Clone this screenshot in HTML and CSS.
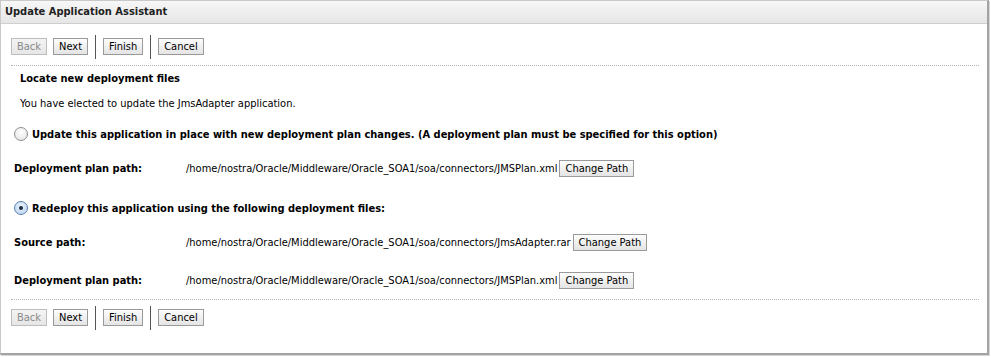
FILE: index.html
```html
<!DOCTYPE html>
<html>
<head>
<meta charset="utf-8">
<link rel="stylesheet" href="styles.css">
</head>
<body>
<div class="panel">
  <div class="header">Update Application Assistant</div>
  <div class="content">
    <div class="toolbar">
      <button class="btn" disabled>Back</button>
      <button class="btn">Next</button>
      <span class="sep"></span>
      <button class="btn">Finish</button>
      <span class="sep"></span>
      <button class="btn">Cancel</button>
    </div>
    <div class="dots"></div>
    <div class="intro">
      <div class="section-title">Locate new deployment files</div>
      <div class="desc">You have elected to update the JmsAdapter application.</div>
    </div>
    <label class="radio-row"><span class="radio"></span><span class="bold">Update this application in place with new deployment plan changes. (A deployment plan must be specified for this option)</span></label>
    <div class="field row1">
      <span class="label">Deployment plan path:</span>
      <span class="value">/home/nostra/Oracle/Middleware/Oracle_SOA1/soa/connectors/JMSPlan.xml</span><button class="btn">Change Path</button>
    </div>
    <label class="radio-row r2"><span class="radio checked"></span><span class="bold">Redeploy this application using the following deployment files:</span></label>
    <div class="field row2">
      <span class="label">Source path:</span>
      <span class="value">/home/nostra/Oracle/Middleware/Oracle_SOA1/soa/connectors/JmsAdapter.rar</span><button class="btn">Change Path</button>
    </div>
    <div class="field row3">
      <span class="label">Deployment plan path:</span>
      <span class="value">/home/nostra/Oracle/Middleware/Oracle_SOA1/soa/connectors/JMSPlan.xml</span><button class="btn">Change Path</button>
    </div>
    <div class="dots d2"></div>
    <div class="toolbar t2">
      <button class="btn" disabled>Back</button>
      <button class="btn">Next</button>
      <span class="sep"></span>
      <button class="btn">Finish</button>
      <span class="sep"></span>
      <button class="btn">Cancel</button>
    </div>
  </div>
</div>
</body>
</html>
```

FILE: styles.css
```css
html, body {
  margin: 0;
  padding: 0;
  background: #ffffff;
}
body {
  font-family: "DejaVu Sans Condensed", "DejaVu Sans", sans-serif;
  font-size: 11px;
  color: #000;
  width: 991px;
  height: 357px;
  overflow: hidden;
}
.panel {
  box-sizing: border-box;
  width: 989px;
  height: 355px;
  border: 1px solid #c9c9c9;
  border-right: 2px solid #a3a3a3;
  border-bottom: 2px solid #a3a3a3;
  box-shadow: 1px 1px 0 #d8d8d8;
  background: #fff;
}
.header {
  height: 22px;
  line-height: 22px;
  padding-left: 4px;
  font-weight: bold;
  font-size: 11px;
  color: #222;
  background: linear-gradient(#f7f7f7, #e6e6e6);
  border-bottom: 1px solid #cfcfcf;
}
.content {
  padding: 0 8px 0 10px;
}
.toolbar {
  display: flex;
  align-items: center;
  gap: 6px;
  height: 23px;
  margin-top: 11px;
}
.btn {
  font-family: inherit;
  font-size: 11px;
  height: 17px;
  padding: 0 5px;
  margin: 0;
  line-height: 15px;
  color: #000;
  background: linear-gradient(#fdfdfd, #e4e4e4);
  border: 1px solid #9a9a9a;
  border-radius: 0;
}
.btn[disabled] {
  color: #8a8a8a;
  border-color: #bdbdbd;
  background: linear-gradient(#f4f4f4, #e6e6e6);
}
.sep {
  width: 1px;
  height: 24px;
  background: #555;
  margin: 0 1px;
}
.dots {
  margin-top: 7px;
  border-top: 1px dotted #b5b5b5;
  margin-right: 0;
}
.intro {
  padding-left: 9px;
}
.section-title {
  font-weight: bold;
  margin-top: 6px;
  line-height: 14px;
}
.desc {
  margin-top: 11px;
  line-height: 14px;
}
.radio-row {
  display: flex;
  align-items: center;
  gap: 4px;
  margin-top: 16px;
  margin-left: 3px;
  height: 14px;
}
.bold { font-weight: bold; }
.radio {
  box-sizing: border-box;
  width: 14px;
  height: 14px;
  border-radius: 50%;
  border: 1px solid #8d8d8d;
  background: radial-gradient(circle at 50% 35%, #ffffff, #e2e2e2);
  display: flex;
  align-items: center;
  justify-content: center;
}
.radio.checked {
  border-color: #5b7fae;
  background: radial-gradient(circle at 50% 35%, #eaf3fd, #b8d2f0);
}
.radio.checked::after {
  content: "";
  width: 4px;
  height: 4px;
  border-radius: 50%;
  background: #1a2c44;
}
.r2 { margin-top: 24px; }
.field {
  display: flex;
  align-items: center;
  margin-left: 3px;
  height: 17px;
}
.label {
  font-weight: bold;
  width: 172px;
  flex: none;
}
.value {
  margin-right: 2px;
}
.row1 { margin-top: 19px; }
.row2 { margin-top: 19px; }
.row3 { margin-top: 21px; }
.d2 { margin-top: 10px; }
.t2 { margin-top: 6px; }
```
